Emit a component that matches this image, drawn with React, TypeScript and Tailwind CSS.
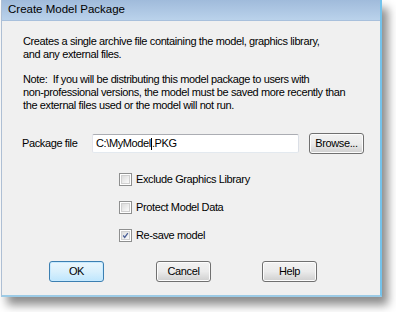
import React from 'react';

const font = { fontFamily: '"Liberation Sans", Arial, sans-serif' };

const Checkbox: React.FC<{ label: string; checked?: boolean }> = ({ label, checked }) => (
  <div className="flex items-center h-[13px]">
    <div className="w-[13px] h-[13px] border border-[#8e8f8f] bg-white p-[1px]">
      <div className="relative w-full h-full border border-[#d0d0d0] bg-gradient-to-br from-[#dcdcdc] to-[#fbfbfb]">
        {checked && (
          <svg viewBox="0 0 9 9" className="absolute inset-0 w-full h-full">
            <path d="M1.5 4.5 L3.5 7 L7.5 1.5" fill="none" stroke="#4a5f97" strokeWidth="1.6" />
          </svg>
        )}
      </div>
    </div>
    <span className="ml-[4px] text-black">{label}</span>
  </div>
);

const Button: React.FC<{ label: string; primary?: boolean; className?: string }> = ({ label, primary, className }) => (
  <div
    className={`flex items-center justify-center h-[21px] rounded-[3px] border text-black ${
      primary
        ? 'border-[#3c7fb1] bg-gradient-to-b from-[#eaf6fd] via-[#d9f0fc] to-[#bee6fd] shadow-[inset_0_0_0_1px_#c7eaff]'
        : 'border-[#707070] bg-gradient-to-b from-[#f2f2f2] via-[#ebebeb] to-[#cfcfcf] shadow-[inset_0_0_0_1px_#fcfcfc]'
    } ${className ?? ''}`}
  >
    {label}
  </div>
);

export default function App() {
  return (
    <div className="w-[396px] h-[312px] bg-white overflow-hidden" style={font}>
      <div className="ml-[1px] w-[381px] h-[297px] flex flex-col border-l border-[#aebfd4] border-r-2 border-r-[#73c3ec] border-b-2 border-b-[#9ccbe6] shadow-[6px_8px_9px_rgba(0,0,0,0.45)]">
        <div className="h-[21px] flex items-center pl-[6px] bg-gradient-to-b from-[#a0bbdb] to-[#bad2eb] border-b border-[#a8c0dc] text-[11.5px] text-black">
          Create Model Package
        </div>
        <div className="flex-1 bg-[#f0f0f0] flex flex-col text-[11px] tracking-[-0.38px] leading-[13px] text-black">
          <p className="ml-[21px] mt-[14px]">
            Creates a single archive file containing the model, graphics library,
            <br />
            and any external files.
          </p>
          <p className="ml-[21px] mt-[12px]">
            Note:&nbsp; If you will be distributing this model package to users with
            <br />
            non-professional versions, the model must be saved more recently than
            <br />
            the external files used or the model will not run.
          </p>
          <div className="flex items-center mt-[22px] h-[19px]">
            <span className="ml-[20px] w-[70px]">Package file</span>
            <div className="w-[207px] h-[19px] flex items-center bg-white border border-[#abadb3] border-l-[#e2e3ea] border-r-[#dbdfe6] border-b-[#e3e9ef] rounded-[2px] pl-[3px]">
              C:\MyModel<span className="inline-block w-[1px] h-[12px] bg-black" />.PKG
            </div>
            <Button label="Browse..." className="ml-[10px] w-[55px] border-[#5a5a5a]" />
          </div>
          <div className="flex flex-col ml-[117px] mt-[20px] gap-[15px]">
            <Checkbox label="Exclude Graphics Library" />
            <Checkbox label="Protect Model Data" />
            <Checkbox label="Re-save model" checked />
          </div>
          <div className="flex mt-[19px] ml-[47px]">
            <Button label="OK" primary className="w-[55px]" />
            <Button label="Cancel" className="w-[55px] ml-[52px]" />
            <Button label="Help" className="w-[55px] ml-[51px]" />
          </div>
        </div>
      </div>
    </div>
  );
}
